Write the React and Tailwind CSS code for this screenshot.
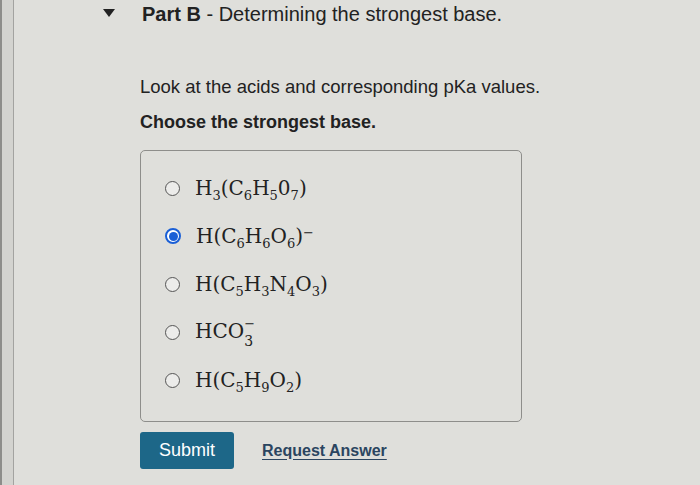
import { useState } from 'react';

const options = [
  { id: 'a', label: (<>H<sub>3</sub>(C<sub>6</sub>H<sub>5</sub>0<sub>7</sub>)</>) },
  { id: 'b', label: (<>H(C<sub>6</sub>H<sub>6</sub>O<sub>6</sub>)<sup>−</sup></>) },
  { id: 'c', label: (<>H(C<sub>5</sub>H<sub>3</sub>N<sub>4</sub>O<sub>3</sub>)</>) },
  {
    id: 'd',
    label: (
      <>
        HCO
        <span className="relative inline-block w-[10px]">
          <span className="absolute left-0 top-[-7px] text-[13px]">−</span>
          <span className="relative top-[8px] text-[14px]">3</span>
        </span>
      </>
    ),
  },
  { id: 'e', label: (<>H(C<sub>5</sub>H<sub>9</sub>O<sub>2</sub>)</>) },
];

function Radio({ checked }) {
  if (checked) {
    return (
      <span className="flex h-[16px] w-[16px] items-center justify-center rounded-full border-[2px] border-[#1a5fd6] bg-white">
        <span className="h-[9px] w-[9px] rounded-full bg-[#1a5fd6]" />
      </span>
    );
  }
  return <span className="h-[15px] w-[15px] rounded-full border-[1.5px] border-[#555] bg-[#ececea]" />;
}

function App() {
  const [selected, setSelected] = useState('b');

  return (
    <div className="flex h-[485px] w-[700px] overflow-hidden bg-[#dfdfdb] font-['Liberation_Sans',Arial,sans-serif] text-[#222]">
      <div className="w-[2px] bg-[#8d8d8a]" />
      <div className="w-[11px] bg-[#d3d3cf]" />
      <div className="w-[1px] bg-[#a3a3a0]" />

      <div className="flex-1">
        <div className="flex h-[56px] items-start pl-[89px] pt-[2px]">
          <span className="mt-[7px] h-0 w-0 border-x-[6px] border-t-[8px] border-x-transparent border-t-[#222]" />
          <h2 className="ml-[27px] text-[20px] leading-[24px]">
            <span className="font-bold">Part B</span> - Determining the strongest base.
          </h2>
        </div>

        <div className="pl-[126px] pt-[20px]">
          <p className="text-[18.5px] leading-[22px]">Look at the acids and corresponding pKa values.</p>
          <p className="mt-[13px] text-[18px] font-bold leading-[22px]">Choose the strongest base.</p>

          <div className="mt-[17px] flex h-[272px] w-[382px] flex-col gap-[26px] rounded-[5px] border border-[#8e8e8b] pl-[24px] pt-[26px]">
            {options.map((o) => (
              <label
                key={o.id}
                className="flex h-[22px] cursor-pointer items-center gap-[15px]"
                onClick={() => setSelected(o.id)}
              >
                <Radio checked={selected === o.id} />
                <span className="font-['DejaVu_Serif','Liberation_Serif',serif] text-[20px] leading-[22px] [&_sub]:text-[13px] [&_sub]:bottom-[-0.35em] [&_sup]:text-[13px]">
                  {o.label}
                </span>
              </label>
            ))}
          </div>

          <div className="mt-[10px] flex items-center gap-[28px]">
            <button className="h-[37px] w-[94px] rounded-[3px] bg-[#1d6788] text-[18px] text-white">Submit</button>
            <a className="text-[16px] font-bold text-[#2b4560] underline underline-offset-[3px]" href="#">
              Request Answer
            </a>
          </div>
        </div>
      </div>
    </div>
  );
}

export default App;
